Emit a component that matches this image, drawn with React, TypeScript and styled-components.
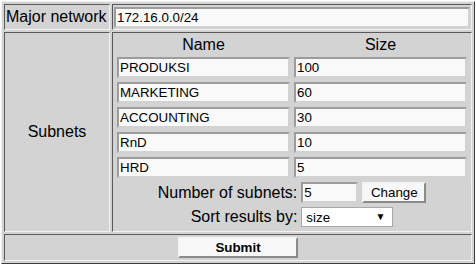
import styled, { createGlobalStyle } from "styled-components"

const GlobalStyle = createGlobalStyle`
  html, body {
    margin: 0;
    padding: 0;
    background: #ffffff;
  }
  body {
    font-family: "Liberation Sans", Arial, sans-serif;
    color: #000;
  }
`

const Page = styled.div`
  padding: 1px 0 0 1px;
`

const FormTable = styled.table`
  width: 474px;
  border-collapse: separate;
  border-spacing: 2px;
  background: #d3d3d3;
  border: 1px solid;
  border-color: #f0f0f0 #3c3c3c #3c3c3c #f0f0f0;
  font-size: 16px;
`

const Cell = styled.td<{ $height?: number; $label?: boolean; $center?: boolean }>`
  border: 1px solid;
  border-color: #5a5a5a #f2f2f2 #f2f2f2 #5a5a5a;
  padding: 1px;
  height: ${(p) => (p.$height ? `${p.$height}px` : "auto")};
  width: ${(p) => (p.$label ? "102px" : "auto")};
  text-align: ${(p) => (p.$label || p.$center ? "center" : "left")};
  vertical-align: middle;
  white-space: nowrap;
  line-height: 18px;
`

const MajorLabel = styled.span`
  display: block;
  text-align: left;
`

const TextInput = styled.input<{ $width?: number }>`
  box-sizing: border-box;
  width: ${(p) => (p.$width ? `${p.$width}px` : "100%")};
  height: 21px;
  margin: 0;
  padding: 1px 2px 1px 1px;
  border: 2px solid;
  border-color: #9c9c9c #d2d2d2 #d2d2d2 #9c9c9c;
  background: #f9f9f9;
  font-family: "Liberation Sans", Arial, sans-serif;
  font-size: 13.33px;
  color: #000;
  vertical-align: middle;
  outline: none;
`

const InnerTable = styled.table`
  width: 100%;
  border-collapse: separate;
  border-spacing: 2px;
  font-size: 16px;
`

const HeadCell = styled.th`
  font-weight: normal;
  text-align: center;
  padding: 0 1px;
  height: 18px;
  line-height: 18px;
  width: 50%;
`

const InnerCell = styled.td<{ $center?: boolean }>`
  padding: 1px;
  text-align: ${(p) => (p.$center ? "center" : "left")};
  white-space: nowrap;
  vertical-align: middle;
  line-height: 18px;
`

const InlineLabel = styled.span`
  vertical-align: middle;
  margin-right: 4px;
`

const Button = styled.button<{ $bold?: boolean; $width: number }>`
  box-sizing: border-box;
  width: ${(p) => p.$width}px;
  height: 21px;
  margin: 0 0 0 4px;
  padding: 0 6px;
  border: 2px solid;
  border-color: #f4f4f4 #8a8a8a #8a8a8a #f4f4f4;
  background: #f8f8f8;
  font-family: "Liberation Sans", Arial, sans-serif;
  font-size: 13.33px;
  font-weight: ${(p) => (p.$bold ? "bold" : "normal")};
  color: #000;
  vertical-align: middle;
`

const SubmitButton = styled(Button)`
  margin: 0;
`

const SelectWrap = styled.span`
  position: relative;
  display: inline-block;
  vertical-align: middle;
  line-height: 0;
`

const Select = styled.select`
  appearance: none;
  box-sizing: border-box;
  width: 92px;
  height: 20px;
  margin: 0;
  padding: 0 4px;
  border: 1px solid #a8a8a8;
  border-radius: 0;
  background: #ffffff;
  font-family: "Liberation Sans", Arial, sans-serif;
  font-size: 13.33px;
  color: #000;
  outline: none;
`

const Arrow = styled.span`
  position: absolute;
  right: 8px;
  top: 5px;
  font-size: 10px;
  line-height: 10px;
  pointer-events: none;
  color: #000;
`

const subnets = [
  { name: "PRODUKSI", size: "100" },
  { name: "MARKETING", size: "60" },
  { name: "ACCOUNTING", size: "30" },
  { name: "RnD", size: "10" },
  { name: "HRD", size: "5" },
]

export default function App() {
  return (
    <Page>
      <GlobalStyle />
      <FormTable>
        <tbody>
          <tr>
            <Cell $label $height={22}>
              <MajorLabel>Major network</MajorLabel>
            </Cell>
            <Cell>
              <TextInput defaultValue="172.16.0.0/24" />
            </Cell>
          </tr>
          <tr>
            <Cell $label $height={190}>Subnets</Cell>
            <Cell>
              <InnerTable>
                <tbody>
                  <tr>
                    <HeadCell>Name</HeadCell>
                    <HeadCell>Size</HeadCell>
                  </tr>
                  {subnets.map((s) => (
                    <tr key={s.name}>
                      <InnerCell>
                        <TextInput defaultValue={s.name} />
                      </InnerCell>
                      <InnerCell>
                        <TextInput defaultValue={s.size} />
                      </InnerCell>
                    </tr>
                  ))}
                  <tr>
                    <InnerCell colSpan={2} $center>
                      <InlineLabel>Number of subnets:</InlineLabel>
                      <TextInput $width={57} defaultValue="5" />
                      <Button $width={64}>Change</Button>
                    </InnerCell>
                  </tr>
                  <tr>
                    <InnerCell colSpan={2} $center>
                      <InlineLabel>Sort results by:</InlineLabel>
                      <SelectWrap>
                        <Select defaultValue="size">
                          <option value="size">size</option>
                          <option value="name">name</option>
                        </Select>
                        <Arrow>▼</Arrow>
                      </SelectWrap>
                    </InnerCell>
                  </tr>
                </tbody>
              </InnerTable>
            </Cell>
          </tr>
          <tr>
            <Cell colSpan={2} $center $height={23}>
              <SubmitButton $bold $width={120}>Submit</SubmitButton>
            </Cell>
          </tr>
        </tbody>
      </FormTable>
    </Page>
  )
}
